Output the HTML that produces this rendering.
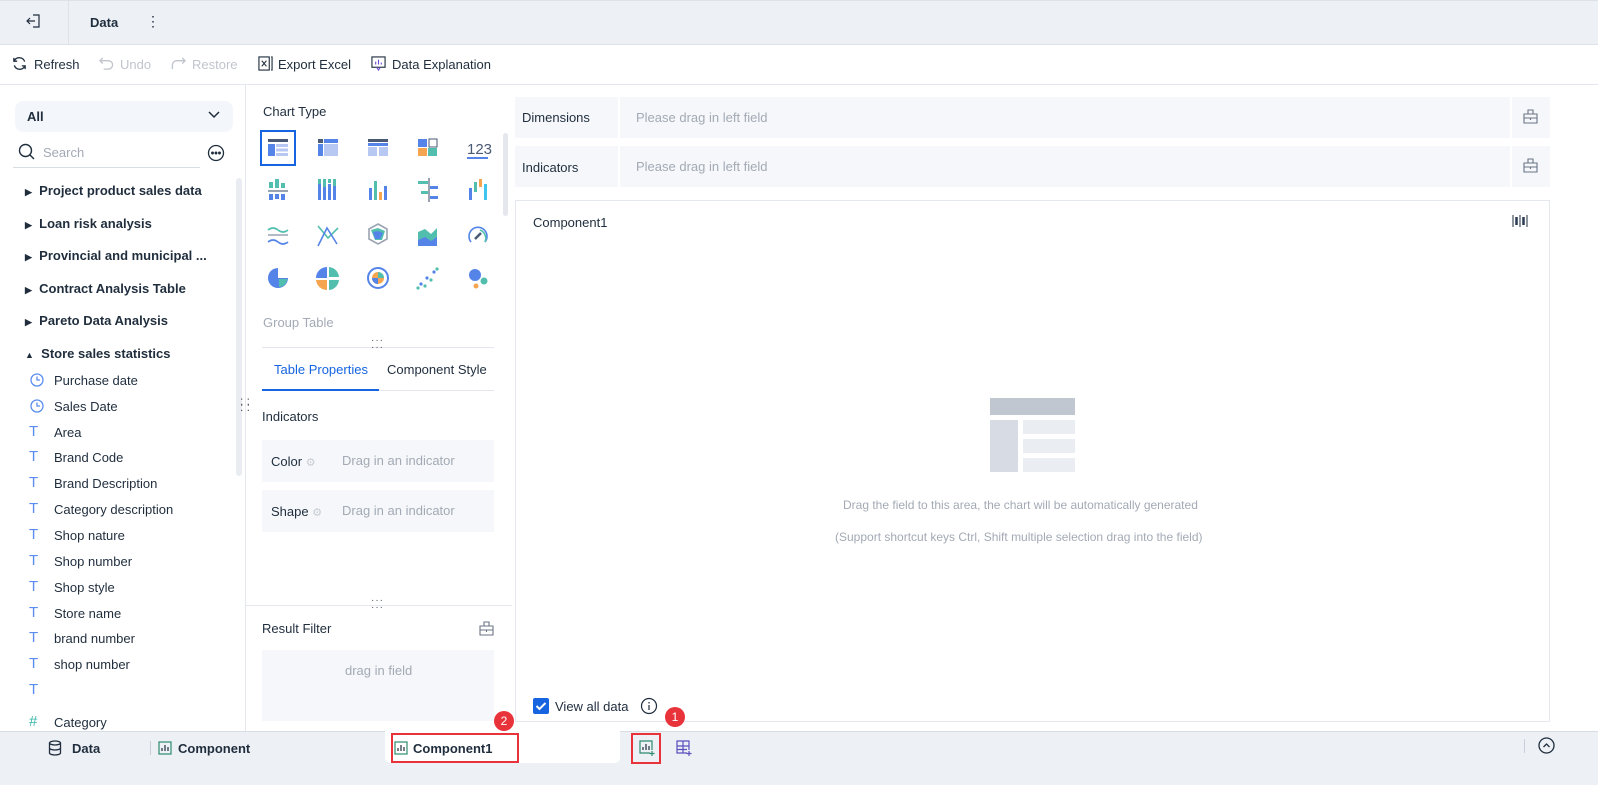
<!DOCTYPE html>
<html><head><meta charset="utf-8"><style>
*{box-sizing:border-box;margin:0;padding:0}
body{width:1598px;height:785px;position:relative;overflow:hidden;background:#fff;font-family:"Liberation Sans",sans-serif;font-size:13px;color:#1f2d3d}
.a{position:absolute}
.t{position:absolute;white-space:nowrap}
.g{color:#a3aab5}
.b{font-weight:bold}
.T{position:absolute;left:29px;color:#5b8def;font-size:15px}
</style></head><body>
<!-- top bar -->
<div class="a" style="left:0;top:0;width:1598px;height:45px;background:#edf0f5;border-top:1px solid #dde1e8;border-bottom:1px solid #dde1e8"></div>
<div class="a" style="left:68px;top:1px;width:1px;height:43px;background:#dde1e8"></div>
<svg class="a" style="left:26px;top:13px" width="16" height="16" viewBox="0 0 16 16" fill="none" stroke="#1f2d3d" stroke-width="1.2"><path d="M7 2h6v12H7M1 8h8M4 5L1 8l3 3"/></svg>
<div class="t b" style="left:90px;top:15px">Data</div>
<div class="t" style="left:146px;top:13px;font-size:14px">⋮</div>
<!-- toolbar -->
<div class="a" style="left:0;top:84px;width:1598px;height:1px;background:#e4e7ed"></div>
<svg class="a" style="left:12px;top:56px" width="15" height="15" viewBox="0 0 16 16" fill="none" stroke="#1f2d3d" stroke-width="1.4"><path d="M13.5 6A6 6 0 0 0 2.5 5M2.5 10a6 6 0 0 0 11 1M2 2v3.5h3.5M14 14v-3.5h-3.5"/></svg>
<div class="t" style="left:34px;top:57px">Refresh</div>
<svg class="a" style="left:99px;top:56px" width="15" height="15" viewBox="0 0 16 16" fill="none" stroke="#c0c4cc" stroke-width="1.4"><path d="M4 2L1 5l3 3M1 5h9a4.5 4.5 0 0 1 0 9H5"/></svg>
<div class="t" style="left:120px;top:57px;color:#c0c4cc">Undo</div>
<svg class="a" style="left:171px;top:56px" width="15" height="15" viewBox="0 0 16 16" fill="none" stroke="#c0c4cc" stroke-width="1.4"><path d="M12 2l3 3-3 3M15 5H6a4.5 4.5 0 0 0-4.5 4.5V14"/></svg>
<div class="t" style="left:192px;top:57px;color:#c0c4cc">Restore</div>
<svg class="a" style="left:258px;top:56px" width="15" height="15" viewBox="0 0 16 16" fill="none" stroke="#1f2d3d" stroke-width="1.2"><rect x="1" y="1" width="11" height="14"/><path d="M14 1h1v14h-1M4 5l5 6M9 5l-5 6"/></svg>
<div class="t" style="left:278px;top:57px">Export Excel</div>
<svg class="a" style="left:371px;top:56px" width="15" height="15" viewBox="0 0 16 16" fill="none" stroke="#1f2d3d" stroke-width="1.2"><rect x="1" y="1" width="14" height="11"/><path d="M6 12l2 3 2-3M5 9V6M8 9V4M11 9V7" stroke="#6b4cd0"/></svg>
<div class="t" style="left:392px;top:57px">Data Explanation</div>
<!-- left panel -->
<div class="a" style="left:245px;top:85px;width:1px;height:646px;background:#e4e7ed"></div>
<div class="a" style="left:15px;top:101px;width:218px;height:31px;background:#f3f6fb;border-radius:8px"></div>
<div class="t b" style="left:27px;top:109px">All</div>
<svg class="a" style="left:207px;top:110px" width="14" height="10" viewBox="0 0 14 10" fill="none" stroke="#1f2d3d" stroke-width="1.5"><path d="M2 2l5 5 5-5"/></svg>
<svg class="a" style="left:18px;top:143px" width="17" height="17" viewBox="0 0 17 17" fill="none" stroke="#1f2d3d" stroke-width="1.4"><circle cx="7.5" cy="7.5" r="6"/><path d="M12 12l4 4"/></svg>
<div class="t g" style="left:43px;top:145px">Search</div>
<div class="a" style="left:13px;top:167px;width:187px;height:1px;background:#d8dce3"></div>
<svg class="a" style="left:207px;top:144px" width="18" height="18" viewBox="0 0 18 18" fill="none" stroke="#1f2d3d" stroke-width="1.3"><circle cx="9" cy="9" r="7.5"/><circle cx="5.5" cy="9" r=".8" fill="#1f2d3d"/><circle cx="9" cy="9" r=".8" fill="#1f2d3d"/><circle cx="12.5" cy="9" r=".8" fill="#1f2d3d"/></svg>
<div class="a" style="left:236px;top:178px;width:6px;height:298px;background:#e9ecf0;border-radius:3px"></div>
<div class="t" style="left:240px;top:398px;color:#556;font-size:12px;line-height:6px">: :<br>: :</div>
<div class="t b" style="left:25px;top:183px"><span style="font-size:9px">▶</span>&nbsp; Project product sales data</div>
<div class="t b" style="left:25px;top:216px"><span style="font-size:9px">▶</span>&nbsp; Loan risk analysis</div>
<div class="t b" style="left:25px;top:248px"><span style="font-size:9px">▶</span>&nbsp; Provincial and municipal ...</div>
<div class="t b" style="left:25px;top:281px"><span style="font-size:9px">▶</span>&nbsp; Contract Analysis Table</div>
<div class="t b" style="left:25px;top:313px"><span style="font-size:9px">▶</span>&nbsp; Pareto Data Analysis</div>
<div class="t b" style="left:25px;top:346px"><span style="font-size:9px">▲</span>&nbsp; Store sales statistics</div>
<svg class="a" style="left:30px;top:373px" width="14" height="14" viewBox="0 0 14 14" fill="none" stroke="#5b8def" stroke-width="1.3"><circle cx="7" cy="7" r="6"/><path d="M7 3.5V7h3"/></svg>
<div class="t" style="left:54px;top:373px">Purchase date</div>
<svg class="a" style="left:30px;top:399px" width="14" height="14" viewBox="0 0 14 14" fill="none" stroke="#5b8def" stroke-width="1.3"><circle cx="7" cy="7" r="6"/><path d="M7 3.5V7h3"/></svg>
<div class="t" style="left:54px;top:399px">Sales Date</div>
<div class="T" style="top:423px">T</div><div class="t" style="left:54px;top:425px">Area</div>
<div class="T" style="top:448px">T</div><div class="t" style="left:54px;top:450px">Brand Code</div>
<div class="T" style="top:474px">T</div><div class="t" style="left:54px;top:476px">Brand Description</div>
<div class="T" style="top:500px">T</div><div class="t" style="left:54px;top:502px">Category description</div>
<div class="T" style="top:526px">T</div><div class="t" style="left:54px;top:528px">Shop nature</div>
<div class="T" style="top:552px">T</div><div class="t" style="left:54px;top:554px">Shop number</div>
<div class="T" style="top:578px">T</div><div class="t" style="left:54px;top:580px">Shop style</div>
<div class="T" style="top:604px">T</div><div class="t" style="left:54px;top:606px">Store name</div>
<div class="T" style="top:629px">T</div><div class="t" style="left:54px;top:631px">brand number</div>
<div class="T" style="top:655px">T</div><div class="t" style="left:54px;top:657px">shop number</div>
<div class="T" style="top:681px">T</div>
<div class="t" style="left:29px;top:713px;color:#3cb6a8;font-size:15px">#</div><div class="t" style="left:54px;top:715px">Category</div>
<!-- middle panel -->
<div class="t" style="left:263px;top:104px">Chart Type</div>
<div class="a" style="left:503px;top:133px;width:5px;height:83px;background:#e4e7ed;border-radius:3px"></div>
<svg class="a" style="left:260px;top:130px" width="245" height="165" viewBox="0 0 245 165">
<rect x="1" y="1" width="34" height="34" fill="none" stroke="#1664e0" stroke-width="2"/>
<rect x="8" y="9" width="20" height="3" fill="#4a5a75"/><rect x="8" y="14" width="7" height="12" fill="#5584e8"/><rect x="16" y="14" width="12" height="3" fill="#b7c9f2"/><rect x="16" y="18.5" width="12" height="3" fill="#b7c9f2"/><rect x="16" y="23" width="12" height="3" fill="#b7c9f2"/>
<rect x="58" y="9" width="5" height="4" fill="#4a5a75"/><rect x="64" y="9" width="14" height="4" fill="#5584e8"/><rect x="58" y="14" width="5" height="12" fill="#5584e8"/><rect x="64" y="14" width="14" height="12" fill="#b7c9f2"/>
<rect x="108" y="9" width="20" height="3" fill="#4a5a75"/><rect x="108" y="13" width="20" height="3" fill="#5584e8"/><rect x="108" y="17" width="9" height="9" fill="#b7c9f2"/><rect x="119" y="17" width="9" height="9" fill="#b7c9f2"/>
<rect x="158" y="9" width="9" height="8" fill="#5584e8"/><rect x="169" y="9" width="8" height="8" fill="#fff" stroke="#4a5a75"/><rect x="158" y="18" width="9" height="8" fill="#f5a44f"/><rect x="168" y="18" width="9" height="8" fill="#52bfae"/>
<text x="207" y="24" font-family="Liberation Sans" font-size="15" fill="#4a5a75">123</text><rect x="207" y="27" width="21" height="2" fill="#5584e8"/>
<g transform="translate(0,44)"><rect x="8" y="16" width="20" height="2" fill="#9aa3b2"/><rect x="9" y="8" width="4" height="6" fill="#52bfae"/><rect x="15" y="5" width="4" height="9" fill="#52bfae"/><rect x="21" y="9" width="4" height="5" fill="#52bfae"/><rect x="9" y="20" width="4" height="6" fill="#5584e8"/><rect x="15" y="20" width="4" height="5" fill="#5584e8"/><rect x="21" y="20" width="4" height="6" fill="#5584e8"/>
<g fill="#5584e8"><rect x="58" y="10" width="3" height="16"/><rect x="63" y="10" width="3" height="16"/><rect x="68" y="10" width="3" height="16"/><rect x="73" y="10" width="3" height="16"/></g><g fill="#52bfae"><rect x="58" y="5" width="3" height="5"/><rect x="63" y="5" width="3" height="8"/><rect x="68" y="5" width="3" height="4"/><rect x="73" y="5" width="3" height="7"/></g>
<rect x="109" y="14" width="3" height="12" fill="#5584e8"/><rect x="114" y="7" width="3" height="19" fill="#52bfae"/><rect x="119" y="18" width="3" height="8" fill="#f5a44f"/><rect x="124" y="12" width="3" height="14" fill="#5584e8"/>
<rect x="168" y="4" width="2" height="24" fill="#9aa3b2"/><rect x="158" y="7" width="10" height="3" fill="#52bfae"/><rect x="170" y="12" width="8" height="3" fill="#5584e8"/><rect x="161" y="17" width="7" height="3" fill="#52bfae"/><rect x="170" y="22" width="8" height="3" fill="#5584e8"/>
<rect x="209" y="14" width="3" height="12" fill="#5584e8"/><rect x="214" y="8" width="3" height="10" fill="#52bfae"/><rect x="219" y="5" width="3" height="8" fill="#f5a44f"/><rect x="224" y="10" width="3" height="16" fill="#3ec6f0"/></g>
<g transform="translate(0,90)" fill="none" stroke-width="1.6"><path d="M8 10q5-4 10 0t10 0" stroke="#52bfae"/><path d="M8 15h20" stroke="#9aa3b2"/><path d="M8 22q5-4 10 0t10 0" stroke="#5584e8"/>
<path d="M58 6l10 12 10-10" stroke="#52bfae"/><path d="M58 26l9-18 10 16" stroke="#5584e8"/>
<path d="M118 4l9 5v10l-9 5-9-5V9z" stroke="#9aa3b2"/><path d="M111 10l7-2 7 3-3 9-7 0z" fill="#52bfae" stroke="none"/><path d="M113 12l5-1 5 2-3 6h-5z" fill="#5584e8" stroke="none"/>
<path d="M158 12l7-3 6 5 6-6v18h-19z" fill="#52bfae" stroke="none"/><path d="M158 20l7-3 6 4 6-4v9h-19z" fill="#5584e8" stroke="none"/>
<path d="M211 22a9 9 0 1 1 14 0" stroke="#5584e8"/><path d="M220 10a9 9 0 0 1 5 12" stroke="#52bfae"/><path d="M215 19l6-6" stroke="#4a5a75" stroke-width="2.5"/></g>
<g transform="translate(0,132)"><path d="M18 6a10 10 0 1 0 10 10H18z" fill="#5584e8"/><path d="M19 17h8a8 8 0 0 1-8 8z" fill="#52bfae"/>
<path d="M67 5v11h-11a11 11 0 0 1 11-11z" fill="#5584e8"/><path d="M69 5a11 11 0 0 1 10 10h-10z" fill="#52bfae"/><path d="M56 18h11v10a11 11 0 0 1-11-10z" fill="#f5a44f"/><path d="M69 18h10a11 11 0 0 1-10 10z" fill="#52bfae"/>
<circle cx="118" cy="16" r="10" fill="none" stroke="#5584e8" stroke-width="2"/><circle cx="118" cy="16" r="6" fill="#f5a44f"/><path d="M118 10v6h6a6 6 0 0 0-6-6z" fill="#52bfae"/><path d="M112 16h6v6a6 6 0 0 1-6-6z" fill="#5584e8"/>
<g fill="#5584e8"><circle cx="161" cy="22" r="1.6"/><circle cx="167" cy="16" r="1.6"/><circle cx="174" cy="10" r="1.6"/></g><g fill="#52bfae"><circle cx="158" cy="26" r="1.6"/><circle cx="165" cy="24" r="1.6"/><circle cx="171" cy="18" r="1.6"/><circle cx="177" cy="7" r="1.6"/></g>
<circle cx="215" cy="13" r="6" fill="#5584e8"/><circle cx="224" cy="19" r="3.5" fill="#52bfae"/><circle cx="216" cy="24" r="2.5" fill="#f5a44f"/></g>
</svg>
<div class="t g" style="left:263px;top:315px">Group Table</div>
<div class="a" style="left:262px;top:347px;width:232px;height:1px;background:#e4e7ed"></div>
<div class="t" style="left:371px;top:337px;color:#556;font-size:10px;letter-spacing:1px;line-height:7px">···<br>···</div>
<div class="t" style="left:274px;top:362px;color:#1664e0">Table Properties</div>
<div class="t" style="left:387px;top:362px">Component Style</div>
<div class="a" style="left:262px;top:390px;width:232px;height:1px;background:#e4e7ed"></div>
<div class="a" style="left:262px;top:389px;width:117px;height:2px;background:#1664e0"></div>
<div class="t" style="left:262px;top:409px">Indicators</div>
<div class="a" style="left:262px;top:440px;width:232px;height:42px;background:#f5f7fa"></div>
<div class="t" style="left:271px;top:454px">Color <span style="color:#c8cdd5;font-size:11px">⚙</span></div>
<div class="t g" style="left:342px;top:453px">Drag in an indicator</div>
<div class="a" style="left:262px;top:490px;width:232px;height:42px;background:#f5f7fa"></div>
<div class="t" style="left:271px;top:504px">Shape <span style="color:#c8cdd5;font-size:11px">⚙</span></div>
<div class="t g" style="left:342px;top:503px">Drag in an indicator</div>
<div class="a" style="left:246px;top:605px;width:266px;height:1px;background:#e4e7ed"></div>
<div class="t" style="left:371px;top:597px;color:#556;font-size:10px;letter-spacing:1px;line-height:7px">···<br>···</div>
<div class="t" style="left:262px;top:621px">Result Filter</div>
<svg class="a" style="left:479px;top:621px" width="15" height="15" viewBox="0 0 15 15" fill="none" stroke="#6b7585" stroke-width="1.1"><path d="M1 5h13v9H1zM5 5V1h5v4M1 9h13M7.5 9v2"/></svg>
<div class="a" style="left:262px;top:650px;width:232px;height:71px;background:#f5f7fa"></div>
<div class="t g" style="left:345px;top:663px">drag in field</div>
<!-- right -->
<div class="a" style="left:515px;top:97px;width:1035px;height:41px;background:#f5f7fa"></div>
<div class="a" style="left:618px;top:97px;width:2px;height:41px;background:#fff"></div>
<div class="a" style="left:1510px;top:97px;width:2px;height:41px;background:#fff"></div>
<div class="t" style="left:522px;top:110px">Dimensions</div>
<div class="t g" style="left:636px;top:110px">Please drag in left field</div>
<svg class="a" style="left:1523px;top:109px" width="15" height="15" viewBox="0 0 15 15" fill="none" stroke="#6b7585" stroke-width="1.1"><path d="M1 5h13v9H1zM5 5V1h5v4M1 9h13M7.5 9v2"/></svg>
<div class="a" style="left:515px;top:146px;width:1035px;height:41px;background:#f5f7fa"></div>
<div class="a" style="left:618px;top:146px;width:2px;height:41px;background:#fff"></div>
<div class="a" style="left:1510px;top:146px;width:2px;height:41px;background:#fff"></div>
<div class="t" style="left:522px;top:160px">Indicators</div>
<div class="t g" style="left:636px;top:159px">Please drag in left field</div>
<svg class="a" style="left:1523px;top:158px" width="15" height="15" viewBox="0 0 15 15" fill="none" stroke="#6b7585" stroke-width="1.1"><path d="M1 5h13v9H1zM5 5V1h5v4M1 9h13M7.5 9v2"/></svg>
<div class="a" style="left:515px;top:200px;width:1035px;height:522px;border:1px solid #e4e7ed"></div>
<div class="t" style="left:533px;top:215px">Component1</div>
<svg class="a" style="left:1512px;top:214px" width="16" height="14" viewBox="0 0 16 14" stroke="#1f2d3d"><path d="M1 1v12M15 1v12M8 1v12" stroke-width="1"/><path d="M4.5 3v8M11.5 3v8" stroke-width="2.5" stroke="#2b3a55"/></svg>
<div class="a" style="left:990px;top:398px;width:85px;height:17px;background:#c0c7d1"></div>
<div class="a" style="left:990px;top:420px;width:28px;height:52px;background:#d7dbe3"></div>
<div class="a" style="left:1023px;top:420px;width:52px;height:14px;background:#eaedf1"></div>
<div class="a" style="left:1023px;top:439px;width:52px;height:14px;background:#eaedf1"></div>
<div class="a" style="left:1023px;top:458px;width:52px;height:14px;background:#eaedf1"></div>
<div class="t g" style="left:843px;top:498px;font-size:12px">Drag the field to this area, the chart will be automatically generated</div>
<div class="t g" style="left:835px;top:530px;font-size:12px">(Support shortcut keys Ctrl, Shift multiple selection drag into the field)</div>
<div class="a" style="left:533px;top:698px;width:16px;height:16px;background:#1664e0;border-radius:2px"></div>
<svg class="a" style="left:533px;top:698px" width="16" height="16"><path d="M3.5 8l3 3 6-6" fill="none" stroke="#fff" stroke-width="2"/></svg>
<div class="t" style="left:555px;top:699px">View all data</div>
<svg class="a" style="left:640px;top:697px" width="18" height="18" viewBox="0 0 18 18" fill="none" stroke="#1f2d3d" stroke-width="1.2"><circle cx="9" cy="9" r="7.5"/><path d="M9 8v5M9 5v1.5"/></svg>
<!-- bottom -->
<div class="a" style="left:0;top:731px;width:1598px;height:54px;background:#edf0f5;border-top:1px solid #d8dce3"></div>
<div class="a" style="left:385px;top:731px;width:235px;height:32px;background:#fff;border-radius:0 0 5px 5px"></div>
<svg class="a" style="left:48px;top:740px" width="14" height="16" viewBox="0 0 14 16" fill="none" stroke="#1f2d3d" stroke-width="1.3"><ellipse cx="7" cy="3" rx="5.5" ry="2"/><path d="M1.5 3v10c0 1.1 2.5 2 5.5 2s5.5-.9 5.5-2V3M1.5 8c0 1.1 2.5 2 5.5 2s5.5-.9 5.5-2"/></svg>
<div class="t b" style="left:72px;top:741px">Data</div>
<div class="a" style="left:150px;top:741px;width:1px;height:14px;background:#ccd"></div>
<svg class="a" style="left:158px;top:741px" width="14" height="14" viewBox="0 0 14 14" fill="none" stroke="#2e8b6e" stroke-width="1.2"><rect x="1" y="1" width="12" height="12"/><path d="M4 10V7M7 10V4M10 10V6" stroke="#1f2d3d"/></svg>
<div class="t b" style="left:178px;top:741px">Component</div>
<div class="a" style="left:391px;top:733px;width:128px;height:30px;border:2px solid #e8333a"></div>
<svg class="a" style="left:394px;top:741px" width="14" height="14" viewBox="0 0 14 14" fill="none" stroke="#2e8b6e" stroke-width="1.2"><rect x="1" y="1" width="12" height="12"/><path d="M4 10V7M7 10V4M10 10V6" stroke="#1f2d3d"/></svg>
<div class="t b" style="left:413px;top:741px">Component1</div>
<div class="a" style="left:494px;top:711px;width:20px;height:20px;border-radius:50%;background:#e8333a;color:#fff;font-size:12px;text-align:center;line-height:20px">2</div>
<div class="a" style="left:665px;top:707px;width:20px;height:20px;border-radius:50%;background:#e8333a;color:#fff;font-size:12px;text-align:center;line-height:20px">1</div>
<div class="a" style="left:631px;top:733px;width:30px;height:31px;border:2px solid #e8333a"></div>
<svg class="a" style="left:639px;top:740px" width="17" height="17" viewBox="0 0 17 17" fill="none" stroke="#2e8b6e" stroke-width="1.2"><path d="M11 13H1V1h12v9"/><path d="M4 10V7M7 10V4M10 10V6" stroke="#1f2d3d"/><path d="M13 11v5M10.5 13.5h5" stroke="#2e8b6e"/></svg>
<svg class="a" style="left:676px;top:740px" width="17" height="17" viewBox="0 0 17 17" fill="none" stroke="#5a4fc0" stroke-width="1.2"><path d="M11 13H1V1h12v9M1 6h12M7 1v12M1 9.5h10"/><path d="M13 11v5M10.5 13.5h5"/></svg>
<div class="a" style="left:1524px;top:739px;width:1px;height:14px;background:#ccd"></div>
<svg class="a" style="left:1538px;top:737px" width="17" height="17" viewBox="0 0 17 17" fill="none" stroke="#1f2d3d" stroke-width="1.3"><circle cx="8.5" cy="8.5" r="7.5"/><path d="M5.5 10l3-3 3 3"/></svg>
</body></html>
